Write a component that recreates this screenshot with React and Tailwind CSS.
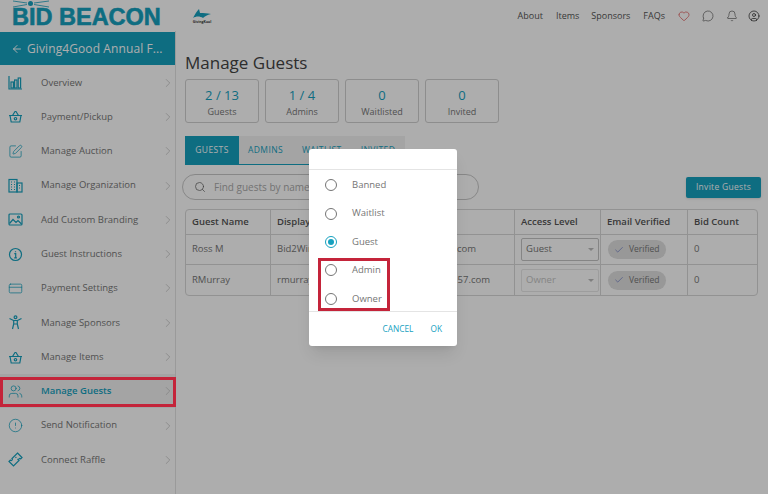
import React from "react";
import {
  ArrowLeft,
  Bell,
  Check,
  ChevronRight,
  CircleAlert,
  CircleUser,
  CreditCard,
  Heart,
  MessageCircle,
  Search,
  SquarePen,
  Users,
} from "lucide-react";

const svgProps = {
  width: 15,
  height: 15,
  viewBox: "0 0 15 15",
  fill: "none",
  stroke: "currentColor",
  strokeWidth: 1,
};

const BarsIcon = (p) => (
  <svg {...svgProps} {...p}>
    <path d="M1 1v13h13" />
    <rect x="3" y="7" width="2.4" height="6" />
    <rect x="6.6" y="5" width="2.4" height="8" />
    <rect x="10.2" y="3" width="2.4" height="10" />
  </svg>
);

const BasketIcon = (p) => (
  <svg {...svgProps} {...p}>
    <path d="M1 6.5h13M2 6.5l1.2 6.5h8.6L13 6.5M4.5 6.5L7 2.5h1l2.5 4" />
    <circle cx="7.5" cy="9.7" r="1.2" />
  </svg>
);

const TowerIcon = (p) => (
  <svg {...svgProps} {...p}>
    <rect x="1" y="1.5" width="8" height="12.5" />
    <rect x="9" y="5" width="5" height="9" />
    <path d="M3 4h1M6 4h1M3 6.5h1M6 6.5h1M3 9h1M6 9h1M3 11.5h1M6 11.5h1M11 7.5h1M11 10h1" />
  </svg>
);

const PictureIcon = (p) => (
  <svg {...svgProps} {...p}>
    <rect x="1" y="2" width="13" height="11" rx="1" />
    <path d="M1.5 11.5L5 7.5l3 3 2-2 3.5 3.5" />
    <circle cx="10.5" cy="5" r="1" />
  </svg>
);

const InfoIcon = (p) => (
  <svg {...svgProps} {...p}>
    <circle cx="7.5" cy="7.5" r="6" />
    <path d="M6.3 6.6h1.4v4M6.2 10.8h2.7M7.5 4.2v1" />
  </svg>
);

const PersonIcon = (p) => (
  <svg {...svgProps} {...p}>
    <circle cx="7.5" cy="2.2" r="1.4" />
    <path d="M1.5 3.5l4 2h4l4-2M5.7 5.5v3.5L4.5 14M9.3 5.5v3.5l1.2 5M5.7 9h3.6" />
  </svg>
);

const TicketIcon = (p) => (
  <svg {...svgProps} {...p}>
    <path d="M9.5 1L14 5.5l-1.3 1.3a1.2 1.2 0 0 0-1.7 1.7L5.5 14 1 9.5l1.3-1.3a1.2 1.2 0 0 0 1.7-1.7z" />
    <path d="M7.5 5l.8.8M9.5 7l.8.8" />
  </svg>
);

const menu = [
  { label: "Overview", icon: BarsIcon },
  { label: "Payment/Pickup", icon: BasketIcon },
  { label: "Manage Auction", icon: SquarePen },
  { label: "Manage Organization", icon: TowerIcon },
  { label: "Add Custom Branding", icon: PictureIcon },
  { label: "Guest Instructions", icon: InfoIcon },
  { label: "Payment Settings", icon: CreditCard },
  { label: "Manage Sponsors", icon: PersonIcon },
  { label: "Manage Items", icon: BasketIcon },
  { label: "Manage Guests", icon: Users, active: true },
  { label: "Send Notification", icon: CircleAlert },
  { label: "Connect Raffle", icon: TicketIcon },
];

const stats = [
  { value: "2 / 13", label: "Guests" },
  { value: "1 / 4", label: "Admins" },
  { value: "0", label: "Waitlisted" },
  { value: "0", label: "Invited" },
];

// the dialog hides most of the email column, only the visible tail is kept
const guests = [
  { name: "Ross M", display: "Bid2Win", email: ".com", level: "Guest", pad: "pr-[38px]" },
  { name: "RMurray", display: "rmurray", email: "57.com", level: "Owner", disabled: true, pad: "pr-[24px]" },
];

const options = ["Banned", "Waitlist", "Guest", "Admin", "Owner"];

const cols = "grid grid-cols-[85px_244px_86px_87px_1fr]";

function Logo() {
  return (
    <div className="relative w-[176px] h-[31px] shrink-0">
      <svg className="absolute left-[12px] top-0" width="40" height="9" viewBox="0 0 40 9">
        <circle cx="18.5" cy="3.5" r="2.5" fill="#16a1bf" />
        <path d="M1 1 L15 3 M1 7 L15 4.5 M22 3 L37 1 M22 4.5 L37 7" stroke="#16a1bf" strokeWidth="0.8" fill="none" />
      </svg>
      <span className="absolute left-[12px] top-[3px] font-['Liberation_Sans'] font-bold text-[23.5px] leading-[28px] [-webkit-text-stroke:0.6px_#16a1bf] text-[#16a1bf] whitespace-nowrap">
        BID BEACON
      </span>
    </div>
  );
}

function Sidebar() {
  return (
    <aside className="w-[176px] shrink-0 border-r border-[#e4e4e4] flex flex-col">
      <div className="h-[33px] mt-px mb-[0.5px] bg-[#16a1bf] flex items-center gap-[4px] pl-[11px] text-white">
        <ArrowLeft size={12} strokeWidth={2} />
        <span className="text-[12px] tracking-[0.1px] whitespace-nowrap">Giving4Good Annual F...</span>
      </div>
      {menu.map((item) => {
        const Icon = item.icon;
        return (
          <div
            key={item.label}
            className={`h-[34.3px] shrink-0 flex items-center pl-[8px] ${item.active ? "bg-[#f2f2f2]" : ""}`}
          >
            <Icon size={15} strokeWidth={1.2} className="text-[#16a1bf] shrink-0" />
            <span
              className={`ml-[18px] flex-1 text-[9.5px] whitespace-nowrap ${
                item.active ? "font-semibold text-[#16a1bf]" : "text-[#777]"
              }`}
            >
              {item.label}
            </span>
            <ChevronRight size={14} strokeWidth={1.2} className="text-[#bbb]" />
          </div>
        );
      })}
    </aside>
  );
}

function GuestTable() {
  return (
    <div className="w-[573px] ml-[3px] mt-[9px] border border-[#d8d8d8] rounded-[4px] text-[9.5px] text-[#777]">
      <div className={`${cols} h-[25px] items-center font-semibold text-[#555] border-b border-[#d8d8d8]`}>
        <div className="h-full flex items-center pl-[6px] border-r border-[#d8d8d8]">Guest Name</div>
        <div className="h-full flex items-center pl-[6px] border-r border-[#d8d8d8]">Display Name</div>
        <div className="h-full flex items-center pl-[6px] border-r border-[#d8d8d8]">Access Level</div>
        <div className="h-full flex items-center pl-[6px] border-r border-[#d8d8d8]">Email Verified</div>
        <div className="h-full flex items-center pl-[6px]">Bid Count</div>
      </div>
      {guests.map((g, i) => (
        <div key={g.name} className={`${cols} h-[30px] ${i === 0 ? "border-b border-[#d8d8d8]" : ""}`}>
          <div className="flex items-center pl-[6px] border-r border-[#d8d8d8]">{g.name}</div>
          <div className={`flex items-center justify-between pl-[6px] border-r border-[#d8d8d8] ${g.pad}`}>
            <span>{g.display}</span>
            <span>{g.email}</span>
          </div>
          <div className="flex items-center pl-[6px] pr-px border-r border-[#d8d8d8]">
            <div
              className={`w-full h-[23px] rounded-[2px] border flex items-center justify-between pl-[4px] pr-[4px] ${
                g.disabled ? "border-[#e8e8e8] text-[#c4c4c4]" : "border-[#c4c4c4] text-[#777]"
              }`}
            >
              {g.level}
              <span className="w-0 h-0 border-x-[3px] border-x-transparent border-t-[3px] border-t-[#bbb]" />
            </div>
          </div>
          <div className="flex items-center pl-[7px] border-r border-[#d8d8d8]">
            <div className="w-[58px] h-[19px] rounded-full bg-[#e0e0e0] flex items-center gap-[5px] pl-[6px] text-[8.5px]">
              <Check size={10} strokeWidth={1.5} className="text-[#5f6fc0]" />
              Verified
            </div>
          </div>
          <div className="flex items-center pl-[6px]">0</div>
        </div>
      ))}
    </div>
  );
}

function Dialog() {
  return (
    <div className="absolute left-[309px] top-[149px] w-[148px] h-[197px] bg-white rounded-[3px] shadow-lg flex flex-col">
      <div className="h-[21px] border-b border-[#e4e4e4] shrink-0" />
      <div className="h-[141px] flex flex-col pt-px">
        {options.map((opt) => (
          <div key={opt} className="h-[28.4px] shrink-0 flex items-center pl-[16px]">
            <span
              className={`w-[12px] h-[12px] rounded-full border-[1.5px] flex items-center justify-center ${
                opt === "Guest" ? "border-[#16a1bf]" : "border-[#757575]"
              }`}
            >
              {opt === "Guest" && <span className="w-[6px] h-[6px] rounded-full bg-[#16a1bf]" />}
            </span>
            <span className="ml-[15px] text-[9.5px] text-[#757575]">{opt}</span>
          </div>
        ))}
      </div>
      <div className="border-t border-[#e4e4e4] flex-1 flex items-center justify-end gap-[17px] pr-[15px] text-[8.3px] text-[#16a1bf]">
        <span>CANCEL</span>
        <span>OK</span>
      </div>
    </div>
  );
}

export default function App() {
  return (
    <div className="relative w-[768px] h-[494px] overflow-hidden bg-white font-['Open_Sans',sans-serif]">
      <div className="flex h-[31px]">
        <Logo />
        <div className="flex-1 flex items-center pl-[16px] pr-[8px]">
          <svg width="20" height="16" viewBox="0 0 20 16">
            <path d="M1 10 C3 6 5 3 7 1 L8 5 C12 5 15 5 19 6 C15 7 13 8 11 10 C8 8 4 8 1 10 Z" fill="#16a1bf" />
            <text x="10" y="14.5" textAnchor="middle" fontSize="3.5" fontWeight="700" fill="#333">GivingKool</text>
          </svg>
          <div className="ml-auto flex items-center text-[9px] text-[#555]">
            <span>About</span>
            <span className="ml-[13px]">Items</span>
            <span className="ml-[12px]">Sponsors</span>
            <span className="ml-[13px]">FAQs</span>
            <Heart size={12} strokeWidth={1.5} className="ml-[13px] text-[#e05a5a]" />
            <MessageCircle size={12} strokeWidth={1.3} className="ml-[12px] text-[#555]" />
            <Bell size={12} strokeWidth={1.3} className="ml-[12px] text-[#555]" />
            <CircleUser size={12} strokeWidth={1.5} className="ml-[10px] text-[#333]" />
          </div>
        </div>
      </div>

      <div className="flex h-[463px]">
        <Sidebar />
        <main className="flex-1 pl-[6px] pr-[7px] pt-[19px]">
          <div className="pl-[3px]">
            <h1 className="text-[17px] leading-[25px] font-medium text-[#444]">Manage Guests</h1>
            <div className="flex gap-[6px] mt-[4px]">
              {stats.map((s) => (
                <div
                  key={s.label}
                  className="w-[74px] h-[44px] border border-[#d0d0d0] rounded-[3px] flex flex-col items-center pt-[6px]"
                >
                  <span className="text-[13px] leading-[18px] text-[#16a1bf]">{s.value}</span>
                  <span className="text-[9px] leading-[13px] mt-[1px] text-[#777]">{s.label}</span>
                </div>
              ))}
            </div>
            <div className="flex mt-[13px] w-[220px] h-[29px] bg-[#f2f2f2] border-b border-[#16a1bf] text-[8.5px] tracking-[0.4px] font-medium text-[#16a1bf]">
              <div className="w-[54px] bg-[#16a1bf] text-white flex items-center justify-center">GUESTS</div>
              <div className="ml-[9px] flex items-center">ADMINS</div>
              <div className="ml-[19px] flex items-center">WAITLIST</div>
              <div className="ml-[19px] flex items-center">INVITED</div>
            </div>
          </div>
          <div className="flex items-start justify-between mt-[9px]">
            <div className="w-[297px] h-[26px] border border-[#c8c8c8] rounded-full flex items-center pl-[11px] gap-[8px] text-[10px] text-[#aaa]">
              <Search size={12} strokeWidth={1.5} className="text-[#666]" />
              Find guests by name or email
            </div>
            <button className="mt-[3px] w-[75px] h-[21px] bg-[#16a1bf] text-white text-[8.5px] tracking-[0.3px] rounded-[2px] shadow">
              Invite Guests
            </button>
          </div>
          <GuestTable />
        </main>
      </div>

      <div className="absolute inset-0 bg-black/32" />
      <Dialog />
      {/* red callouts drawn over the screenshot */}
      <div className="absolute left-0 top-[377px] w-[176px] h-[30px] border-[3px] border-[#c4243a]" />
      <div className="absolute left-[318px] top-[258px] w-[72px] h-[53px] border-[3px] border-[#c4243a]" />
    </div>
  );
}
